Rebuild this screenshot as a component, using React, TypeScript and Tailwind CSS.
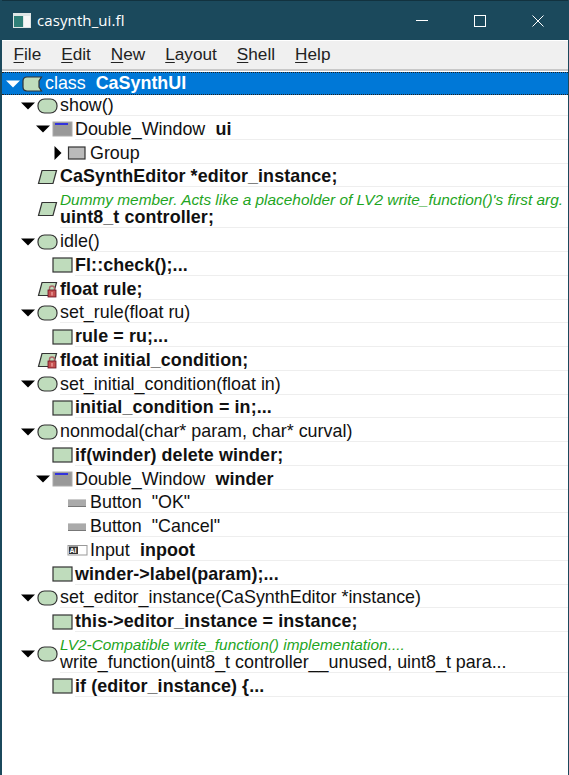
const MENU = ['File', 'Edit', 'New', 'Layout', 'Shell', 'Help'];

type Row = {
  level: 0 | 1 | 2 | 3;
  arrow?: 'down' | 'right';
  icon: 'class' | 'func' | 'window' | 'group' | 'member' | 'lockmember' | 'code' | 'button' | 'input';
  text?: string;
  name?: string;
  bold?: string;
  comment?: string;
};

const ROWS: Row[] = [
  { level: 1, arrow: 'down', icon: 'func', text: 'show()' },
  { level: 2, arrow: 'down', icon: 'window', text: 'Double_Window', name: 'ui' },
  { level: 3, arrow: 'right', icon: 'group', text: 'Group' },
  { level: 1, icon: 'member', bold: 'CaSynthEditor *editor_instance;' },
  { level: 1, icon: 'member', comment: "Dummy member. Acts like a placeholder of LV2 write_function()'s first arg.", bold: 'uint8_t controller;' },
  { level: 1, arrow: 'down', icon: 'func', text: 'idle()' },
  { level: 2, icon: 'code', bold: 'Fl::check();...' },
  { level: 1, icon: 'lockmember', bold: 'float rule;' },
  { level: 1, arrow: 'down', icon: 'func', text: 'set_rule(float ru)' },
  { level: 2, icon: 'code', bold: 'rule = ru;...' },
  { level: 1, icon: 'lockmember', bold: 'float initial_condition;' },
  { level: 1, arrow: 'down', icon: 'func', text: 'set_initial_condition(float in)' },
  { level: 2, icon: 'code', bold: 'initial_condition = in;...' },
  { level: 1, arrow: 'down', icon: 'func', text: 'nonmodal(char* param, char* curval)' },
  { level: 2, icon: 'code', bold: 'if(winder) delete winder;' },
  { level: 2, arrow: 'down', icon: 'window', text: 'Double_Window', name: 'winder' },
  { level: 3, icon: 'button', text: 'Button  "OK"' },
  { level: 3, icon: 'button', text: 'Button  "Cancel"' },
  { level: 3, icon: 'input', text: 'Input', name: 'inpoot' },
  { level: 2, icon: 'code', bold: 'winder->label(param);...' },
  { level: 1, arrow: 'down', icon: 'func', text: 'set_editor_instance(CaSynthEditor *instance)' },
  { level: 2, icon: 'code', bold: 'this->editor_instance = instance;' },
  { level: 1, arrow: 'down', icon: 'func', comment: 'LV2-Compatible write_function() implementation....', text: 'write_function(uint8_t controller__unused, uint8_t para...' },
  { level: 2, icon: 'code', bold: 'if (editor_instance) {...' },
];

const INDENT = ['pl-[4px]', 'pl-[19px]', 'pl-[34px]', 'pl-[49px]'];

function Arrow({ dir, white }: { dir?: 'down' | 'right'; white?: boolean }) {
  return (
    <span className="w-[16px] shrink-0 flex justify-center pr-[1px]">
      {dir === 'down' && (
        <svg width="15" height="8" viewBox="0 0 15 8">
          <path d="M0 0.5H14L7 7.5Z" fill={white ? '#fff' : '#000'} />
        </svg>
      )}
      {dir === 'right' && (
        <svg width="9" height="14" viewBox="0 0 9 14">
          <path d="M0.5 0V14L7.5 7Z" fill="#000" />
        </svg>
      )}
    </span>
  );
}

function NodeIcon({ type }: { type: Row['icon'] }) {
  const green = '#bfdcbc';
  const line = '#333';
  return (
    <svg width="21" height="16" viewBox="0 0 21 16" className="shrink-0 overflow-visible">
      {type === 'class' && <path d="M5 1H19.5L17 5V11L19.5 15H5Q1 15 1 11V5Q1 1 5 1Z" fill={green} stroke={line} strokeWidth="1.2" />}
      {type === 'func' && <rect x="1" y="1" width="19" height="14" rx="6.5" fill={green} stroke={line} strokeWidth="1.2" />}
      {type === 'window' && (
        <g>
          <rect x="1" y="1" width="19" height="14" fill="#999" stroke="#aaa" />
          <rect x="3" y="2" width="13" height="2" fill="#3333dd" />
        </g>
      )}
      {type === 'group' && <rect x="1.5" y="2" width="16.5" height="12" fill="#bbb" stroke="#333" strokeWidth="1.2" />}
      {(type === 'member' || type === 'lockmember') && <path d="M5 1.5H19.5L16 14.5H1.5Z" fill={green} stroke={line} strokeWidth="1.2" />}
      {type === 'lockmember' && (
        <g>
          <path d="M12.5 9V7.5A2.5 2.5 0 0 1 17.5 7.5V9" fill="none" stroke="#a66" strokeWidth="1.4" />
          <rect x="11" y="9" width="8" height="7" fill="#c45050" stroke="#612" strokeWidth="0.8" />
          <rect x="14.5" y="11" width="1" height="3.5" fill="#fbb" />
        </g>
      )}
      {type === 'code' && <rect x="1" y="1" width="19" height="14" fill={green} stroke={line} strokeWidth="1.2" />}
      {type === 'button' && (
        <g>
          <rect x="1" y="4" width="18" height="8" fill="#aaa" />
          <rect x="1" y="4" width="18" height="1" fill="#ccc" />
          <rect x="1" y="11" width="18" height="1" fill="#777" />
        </g>
      )}
      {type === 'input' && (
        <g>
          <rect x="1" y="3.5" width="19" height="9.5" fill="#fff" stroke="#999" />
          <rect x="2" y="4.5" width="9" height="7.5" fill="#333" />
          <text x="2.5" y="11" fontSize="7" fontWeight="700" fill="#fff" fontFamily="Liberation Sans">AI</text>
        </g>
      )}
    </svg>
  );
}

function TreeRow({ row }: { row: Row }) {
  return (
    <div className={`flex items-center ${INDENT[row.level]}`}>
      <span className="pt-[3px] flex items-center"><Arrow dir={row.arrow} /></span>
      <span className="w-[23px] shrink-0 pt-[3px] flex items-center">
        <NodeIcon type={row.icon} />
      </span>
      <div className="flex-1 min-w-0 border-b border-[#eeeeee] flex flex-col justify-center whitespace-pre">
        {row.comment && (
          <div className="pt-[6px] text-[15.4px] leading-[14px] italic text-[#1ea51e]">{row.comment}</div>
        )}
        <div className={`leading-[20px] text-[#111] ${row.comment ? 'h-[20px]' : 'h-[22.75px] pt-[2.75px]'}`}>
          {row.text}
          {row.name && <span className="font-bold tracking-[0.1px]">{'  ' + row.name}</span>}
          {row.bold && <span className="font-bold tracking-[0.1px]">{row.bold}</span>}
        </div>
      </div>
    </div>
  );
}

export default function App() {
  return (
    <div className="w-[569px] h-[775px] bg-[#1b495c] pl-[2px] pr-[1px] flex flex-col font-['Liberation_Sans',sans-serif] overflow-hidden">
      {/* Title bar */}
      <div className="h-[40px] flex items-center shrink-0 text-white border-t border-[#12323f]">
        <svg width="18" height="15" viewBox="0 0 18 15" className="ml-[11px] shrink-0">
          <rect x="0" y="0" width="18" height="15" fill="#dfe6e6" />
          <rect x="1" y="3" width="9" height="11" fill="#2f7f78" />
          <rect x="11" y="3" width="6" height="11" fill="#f7f7f7" />
        </svg>
        <span className="ml-[6px] text-[15px] font-['Open_Sans',sans-serif] tracking-[0.1px]">casynth_ui.fl</span>
        <div className="ml-auto mr-[7.5px] flex items-center">
          <div className="w-[46px] flex justify-center"><div className="w-[12px] h-px bg-white" /></div>
          <div className="w-[46px] mx-[12px] flex justify-center"><div className="w-[12px] h-[12px] border border-white" /></div>
          <div className="w-[46px] flex justify-center">
            <svg width="12" height="12" viewBox="0 0 12 12"><path d="M0.5 0.5L11.5 11.5M11.5 0.5L0.5 11.5" stroke="#fff" /></svg>
          </div>
        </div>
      </div>

      <div className="flex-1 bg-white flex flex-col text-[17.9px]">
        {/* Menu */}
        <div className="h-[31px] bg-[#f0f0f0] border-b-2 border-[#c8c8c8] border-t border-t-white flex items-center gap-[20px] pl-[11.5px] text-[17.2px] text-[#222] shrink-0">
          {MENU.map((m) => (
            <span key={m}><span className="underline underline-offset-2">{m[0]}</span>{m.slice(1)}</span>
          ))}
        </div>

        {/* Selected root */}
        <div className="relative z-10 h-[23px] mt-[1px] bg-[#0078d7] border-y border-dotted border-[#222] flex items-center pl-[4px] text-white shrink-0">
          <Arrow dir="down" white />
          <span className="w-[23px] shrink-0 flex items-center"><NodeIcon type="class" /></span>
          <span className="whitespace-pre">class  <span className="font-bold">CaSynthUI</span></span>
        </div>

        <div className="-mt-[2.7px]">
          {ROWS.map((r, i) => <TreeRow key={i} row={r} />)}
        </div>
      </div>
    </div>
  );
}
